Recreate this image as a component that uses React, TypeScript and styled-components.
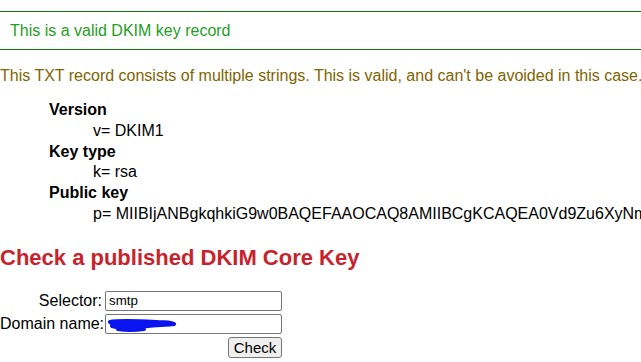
import styled, { createGlobalStyle } from "styled-components";

const GlobalStyle = createGlobalStyle`
  html, body {
    margin: 0;
    padding: 0;
    background: #ffffff;
    overflow: hidden;
  }
  body {
    font-family: "Liberation Sans", Arial, sans-serif;
    font-size: 16px;
    color: #000000;
  }
`;

const Page = styled.div`
  width: 641px;
  height: 362px;
  overflow: hidden;
`;

const ResultBox = styled.div`
  margin-top: 11px;
  border-top: 1px solid #0a7a0a;
  border-bottom: 1px solid #0a7a0a;
  padding: 10px 10px 9px;
  line-height: 18px;
  color: #1f9e1f;
`;

const Note = styled.p`
  margin: 17px 0 0;
  line-height: 18px;
  color: #7f6400;
  white-space: nowrap;
`;

const TagList = styled.dl`
  margin: 15px 0 0 49px;
  line-height: 20.8px;
  white-space: nowrap;
`;

const TagName = styled.dt`
  font-weight: bold;
`;

const TagValue = styled.dd`
  margin-left: 44px;
`;

const Heading = styled.h2`
  margin: 20px 0 0;
  font-size: 22px;
  line-height: 25px;
  font-weight: bold;
  color: #c8232c;
`;

const Form = styled.form`
  margin-top: 21px;
  display: grid;
  grid-template-columns: 102px 177px;
  column-gap: 3px;
  row-gap: 3px;
  align-items: center;
`;

const Label = styled.label`
  text-align: right;
  white-space: nowrap;
  line-height: 20px;
`;

const FieldWrap = styled.div`
  position: relative;
  height: 20px;
`;

const TextInput = styled.input`
  box-sizing: border-box;
  width: 177px;
  height: 20px;
  margin: 0;
  padding: 1px 3px;
  border: 1px solid #767676;
  border-radius: 2px;
  font-family: "Liberation Sans", Arial, sans-serif;
  font-size: 13.33px;
  color: #000;
  background: #fff;
`;

const Scribble = styled.svg`
  position: absolute;
  left: 3px;
  top: 3px;
  pointer-events: none;
`;

const ButtonCell = styled.div`
  grid-column: 2;
  display: flex;
  justify-content: flex-end;
`;

const CheckButton = styled.button`
  box-sizing: border-box;
  width: 54px;
  height: 21px;
  padding: 0;
  border: 1px solid #767676;
  border-radius: 3px;
  background: #efefef;
  font-family: "Liberation Sans", Arial, sans-serif;
  font-size: 15px;
  line-height: 17px;
  color: #000;
`;

const tags = [
  { name: "Version", value: "v= DKIM1" },
  { name: "Key type", value: "k= rsa" },
  {
    name: "Public key",
    value: "p= MIIBIjANBgkqhkiG9w0BAQEFAAOCAQ8AMIIBCgKCAQEA0Vd9Zu6XyNm",
  },
];

export default function App() {
  return (
    <Page>
      <GlobalStyle />
      <ResultBox>This is a valid DKIM key record</ResultBox>
      <Note>
        This TXT record consists of multiple strings. This is valid, and can't
        be avoided in this case.
      </Note>
      <TagList>
        {tags.map((t) => (
          <div key={t.name}>
            <TagName>{t.name}</TagName>
            <TagValue>{t.value}</TagValue>
          </div>
        ))}
      </TagList>
      <Heading>Check a published DKIM Core Key</Heading>
      <Form onSubmit={(e) => e.preventDefault()}>
        <Label htmlFor="selector">Selector:</Label>
        <FieldWrap>
          <TextInput id="selector" defaultValue="smtp" />
        </FieldWrap>
        <Label htmlFor="domain">Domain name:</Label>
        <FieldWrap>
          <TextInput id="domain" defaultValue="" />
          <Scribble width="70" height="16" viewBox="0 0 70 16">
            <path
              d="M2 5 C12 3 30 4 50 5 C58 5 64 6 66 7 C60 8 48 8 40 9 C30 10 14 10 4 9 C10 11 24 12 36 12 C28 13 16 13 10 12"
              fill="none"
              stroke="#0a14f0"
              strokeWidth="4"
              strokeLinecap="round"
              strokeLinejoin="round"
            />
            <path
              d="M4 7 L60 7"
              stroke="#0a14f0"
              strokeWidth="4"
              strokeLinecap="round"
            />
          </Scribble>
        </FieldWrap>
        <ButtonCell>
          <CheckButton type="submit">Check</CheckButton>
        </ButtonCell>
      </Form>
    </Page>
  );
}
